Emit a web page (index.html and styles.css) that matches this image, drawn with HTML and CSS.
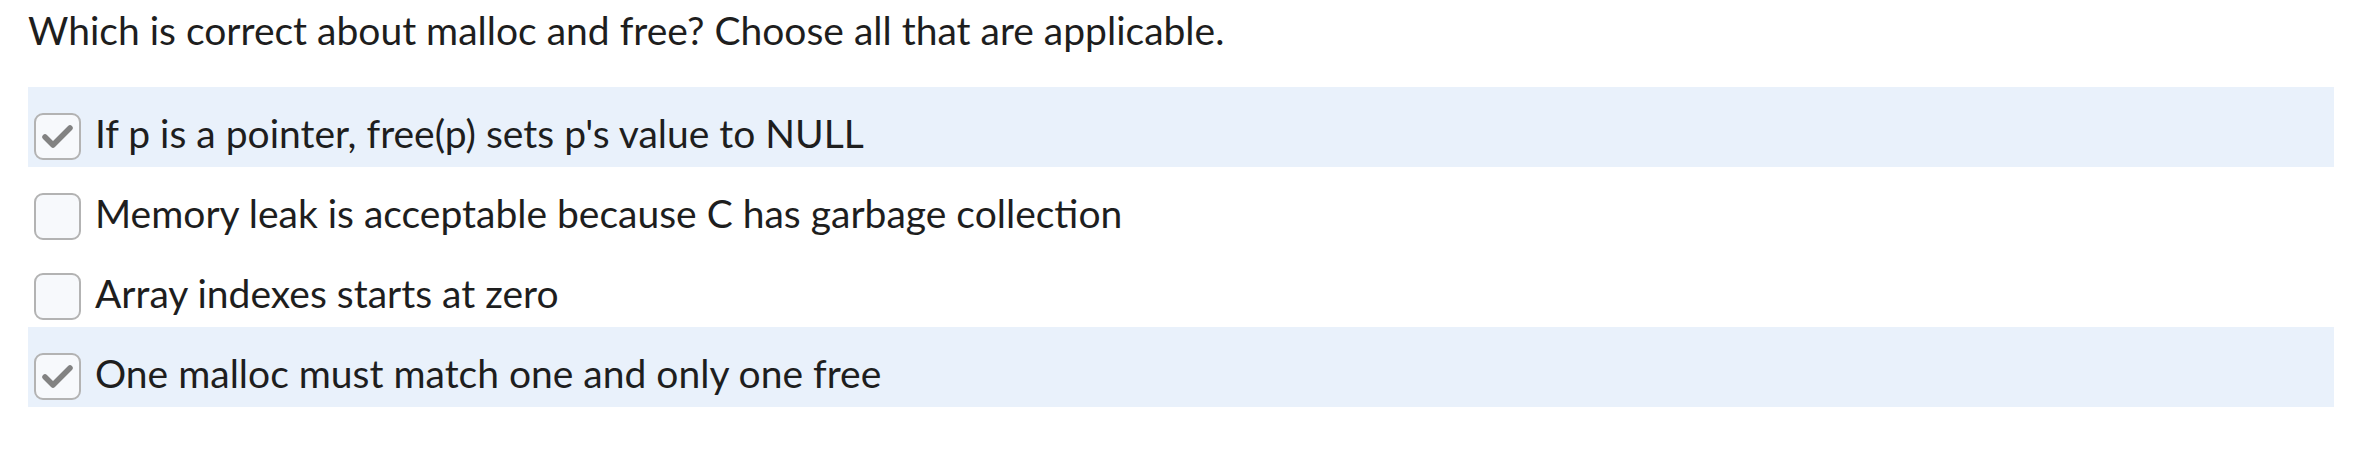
FILE: index.html
```html
<!DOCTYPE html>
<html>
<head>
    <title>Quiz question</title>
    <link rel="stylesheet" href="styles.css">
</head>
<body>
    <div class="question">
        <p class="prompt">Which is correct about malloc and free? Choose all that are applicable.</p>

        <div class="choices">
            <label class="choice picked">
                <span class="box">
                    <svg viewBox="0 0 44 43" width="44" height="43"><path d="M9 22 L17 30 L34 13" /></svg>
                </span>
                <span class="text">If p is a pointer, free(p) sets p's value to NULL</span>
            </label>
            <label class="choice">
                <span class="box"></span>
                <span class="text">Memory leak is acceptable because C has garbage collection</span>
            </label>
            <label class="choice">
                <span class="box"></span>
                <span class="text">Array indexes starts at zero</span>
            </label>
            <label class="choice picked">
                <span class="box">
                    <svg viewBox="0 0 44 43" width="44" height="43"><path d="M9 22 L17 30 L34 13" /></svg>
                </span>
                <span class="text">One malloc must match one and only one free</span>
            </label>
        </div>
    </div>
</body>
</html>
```

FILE: styles.css
```css
body{
    margin: 0;
    background-color: #ffffff;
    font-family: Lato, "Noto Sans", sans-serif;
    color: #1e1e1e;
}

.question{
    padding: 8px 26px 0 28px;
}

.prompt{
    margin: 0;
    font-size: 39px;
    line-height: 44px;
    height: 79px;
}

.choices{
    display: flex;
    flex-direction: column;
}

.choice{
    display: flex;
    align-items: flex-start;
    height: 80px;
    box-sizing: border-box;
    padding-left: 6px;
    font-size: 39px;
}

.choice.picked{
    background-color: #e9f1fb;
}

.box{
    box-sizing: border-box;
    flex: none;
    width: 47px;
    height: 47px;
    margin-top: 26px;
    margin-right: 14px;
    border: 2px solid #b3b3b3;
    border-radius: 9px;
    background-color: #f7f9fc;
}

.box svg{
    display: block;
}

.box svg path{
    fill: none;
    stroke: #828282;
    stroke-width: 5.5;
    stroke-linecap: round;
    stroke-linejoin: round;
}

.text{
    margin-top: 26px;
    line-height: 40px;
}
```
